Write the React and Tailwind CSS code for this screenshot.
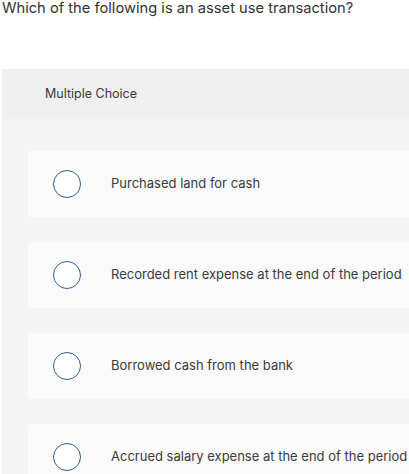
import React from "react";

const choices = [
  "Purchased land for cash",
  "Recorded rent expense at the end of the period",
  "Borrowed cash from the bank",
  "Accrued salary expense at the end of the period",
];

const App = () => {
  return (
    <div className="w-[409px] h-[474px] overflow-hidden bg-white text-[#333] font-['Inter',sans-serif]">
      {/* question */}
      <p className="pl-[2px] text-[14.7px] leading-[16px] text-[#333]">
        Which of the following is an asset use transaction?
      </p>

      {/* panel */}
      <div className="mt-[53px] ml-[2px] bg-[#f4f4f4] pb-8">
        <div className="h-[50px] bg-[#f0f0f0] flex items-center pl-[43px] text-[12.5px] text-[#3a3a3a]">
          Multiple Choice
        </div>

        <div className="pt-8 pl-[26px] flex flex-col gap-[25px]">
          {choices.map((c, i) => (
            <div key={i} className="h-[66px] bg-[#fafafa] rounded-l-[3px] flex items-center">
              <span className="ml-[25px] w-[28px] h-[28px] rounded-full border-[1.5px] border-[#2f5e8c] bg-white shrink-0" />
              <span className="ml-[30px] text-[13px] text-[#3a3a3a] whitespace-nowrap">{c}</span>
            </div>
          ))}
        </div>
      </div>
    </div>
  );
};

export default App;
